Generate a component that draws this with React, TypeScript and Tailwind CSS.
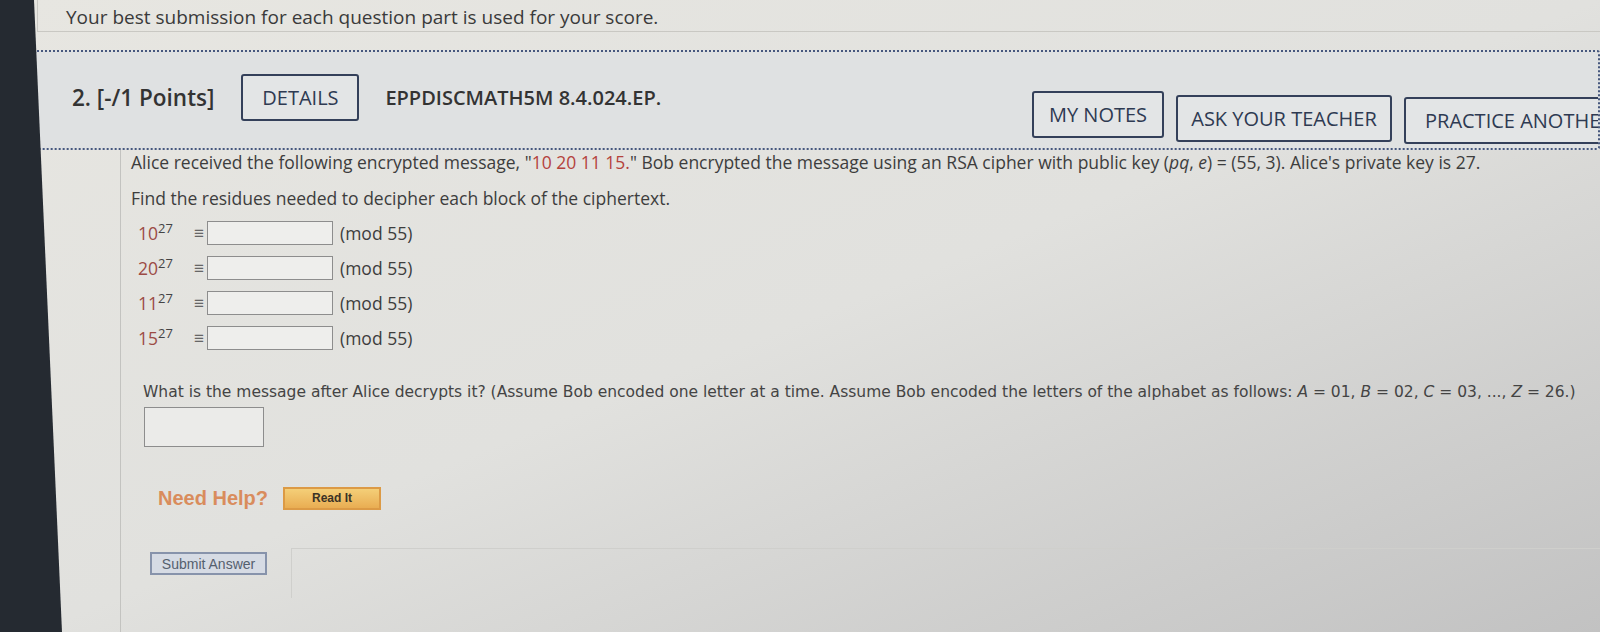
const residues = [
  { base: '10' },
  { base: '20' },
  { base: '11' },
  { base: '15' },
];

function HeaderButton({ label, className = '' }: { label: string; className?: string }) {
  return (
    <button
      className={`flex h-[47px] shrink-0 items-center justify-center whitespace-nowrap rounded-[3px] border-2 border-[#34405a] bg-[#e3e5e6] text-[20px] text-[#2e3a52] ${className}`}
    >
      {label}
    </button>
  );
}

export default function App() {
  return (
    <div className="flex h-[632px] w-[1600px] overflow-hidden font-['Open_Sans',sans-serif] text-[#3d3d3d]">
      {/* dark bezel edge, slanted by the camera angle */}
      <div className="relative z-10 w-[62px] shrink-0 bg-[#252a31] [clip-path:polygon(0_0,34px_0,62px_100%,0_100%)]" />
      <main className="-ml-[28px] flex min-w-0 flex-1 flex-col bg-gradient-to-br from-[#e7e6e1] via-[#e1e1de] to-[#c2c2c2]">
        {/* score notice */}
        <div className="ml-[3px] flex h-[32px] items-end border-b border-l border-[#c9c8c3] pb-[4px] pl-[28px]">
          <p className="text-[19px] leading-none text-[#3a3a3a]">
            Your best submission for each question part is used for your score.
          </p>
        </div>

        {/* question header */}
        <div className="mt-[18px] flex h-[100px] items-start rounded-[3px] border-2 border-dotted border-[#46577e] bg-[#dfe1e2]">
          <div className="mt-[22px] flex items-center">
            <span className="ml-[36px] text-[22.5px] font-semibold text-[#333]">2. [-/1 Points]</span>
            <HeaderButton label="DETAILS" className="ml-[27px] w-[118px]" />
            <span className="ml-[26px] text-[20px] font-semibold text-[#333]">EPPDISCMATH5M 8.4.024.EP.</span>
          </div>
          <div className="ml-auto mt-[39px] flex items-start gap-[12px] overflow-hidden">
            <HeaderButton label="MY NOTES" className="w-[132px]" />
            <HeaderButton label="ASK YOUR TEACHER" className="mt-[4px] w-[216px]" />
            <HeaderButton label="PRACTICE ANOTHER" className="-mr-[38px] mt-[6px] w-[232px] !justify-start pl-[19px]" />
          </div>
        </div>

        {/* question body */}
        <div className="ml-[86px] flex flex-1 flex-col border-l border-[#c3c3c0] pl-[10px]">
          <p className="text-[17.5px] leading-[24px] text-[#3d3d3d]">
            Alice received the following encrypted message, "
            <span className="text-[#b4423d]">10 20 11 15.</span>" Bob encrypted the message using an RSA cipher
            with public key (<i>pq</i>, <i>e</i>) = (55, 3). Alice's private key is 27.
          </p>
          <p className="mt-[12px] text-[17.5px] leading-[24px]">
            Find the residues needed to decipher each block of the ciphertext.
          </p>

          <div className="mt-[11px] flex flex-col gap-[11px] pl-[7px]">
            {residues.map((r) => (
              <div key={r.base} className="flex h-[24px] items-center text-[17.5px]">
                <span className="w-[56px] text-[#9c4b45]">
                  {r.base}
                  <sup className="text-[13px] text-[#444]">27</sup>
                </span>
                <span className="w-[12px] text-[17px] text-[#666]">≡</span>
                <input className="ml-[1px] h-[24px] w-[126px] border border-[#8d8d8d] bg-[#eeeeec]" />
                <span className="ml-[7px]">(mod 55)</span>
              </div>
            ))}
          </div>

          <p className="mt-[32px] pl-[12px] font-['DejaVu_Sans',sans-serif] text-[15.5px] leading-[20px] text-[#444]">
            What is the message after Alice decrypts it? (Assume Bob encoded one letter at a time. Assume Bob encoded
            the letters of the alphabet as follows: <i>A</i> = 01, <i>B</i> = 02, <i>C</i> = 03, ..., <i>Z</i> = 26.)
          </p>
          <input className="ml-[13px] mt-[5px] h-[40px] w-[120px] border border-[#8d8d8d] bg-[#ebebe9]" />

          <div className="mt-[36px] flex items-center pl-[27px]">
            <span className="font-['Liberation_Sans',sans-serif] text-[20px] font-bold text-[#d98c5c]">
              Need Help?
            </span>
            <button className="ml-[15px] h-[23px] w-[98px] border-2 border-[#dc9a45] bg-gradient-to-b from-[#f4cf78] to-[#e9ad52] font-['Liberation_Sans',sans-serif] text-[12px] font-bold text-[#3b3326]">
              Read It
            </button>
          </div>

          <div className="mt-[35px] flex items-start">
            <button className="ml-[19px] mt-[4px] h-[23px] w-[117px] border-2 border-[#8793ab] bg-[#d6dbe4] font-['Liberation_Sans',sans-serif] text-[14px] text-[#55606e]">
              Submit Answer
            </button>
            <div className="ml-[24px] h-[50px] flex-1 border-l border-t border-[#cfcfcc]" />
          </div>
        </div>
      </main>
    </div>
  );
}
